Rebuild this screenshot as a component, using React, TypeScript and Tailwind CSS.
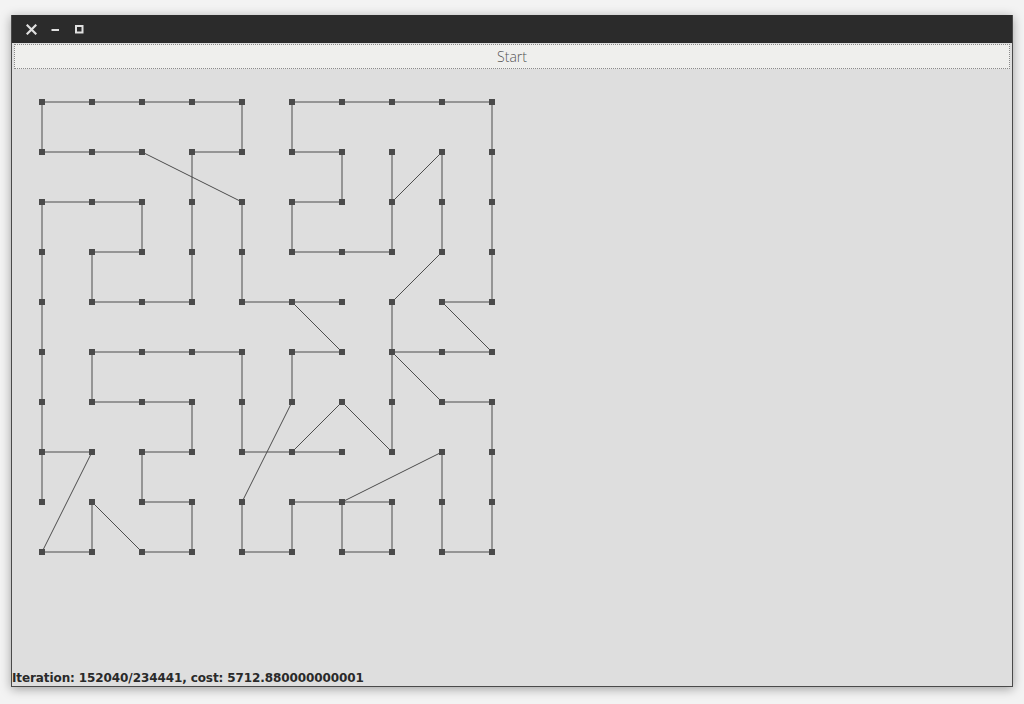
import React from "react"

// node grid: col c, row r -> local svg coords
const px = (c: number) => 30 + 50 * c
const py = (r: number) => 33 + 50 * r

// polylines through the grid, [c, r] pairs
const paths: number[][][] = [
  [[4, 1], [4, 0], [3, 0], [2, 0], [1, 0], [0, 0], [0, 1], [1, 1], [2, 1], [4, 2], [4, 3], [4, 4], [5, 4], [6, 4]],
  [[5, 4], [6, 5], [5, 5], [5, 6], [4, 8], [4, 9], [5, 9], [5, 8], [6, 8], [7, 8], [7, 9], [6, 9], [6, 8]],
  [[6, 8], [8, 7], [8, 8], [8, 9], [9, 9], [9, 8], [9, 7], [9, 6], [8, 6], [7, 5], [8, 5], [9, 5], [8, 4], [9, 4], [9, 3], [9, 2], [9, 1], [9, 0], [8, 0], [7, 0], [6, 0], [5, 0], [5, 1], [6, 1], [6, 2], [5, 2], [5, 3], [6, 3], [7, 3], [7, 2], [7, 1]],
  [[7, 2], [8, 1], [8, 2], [8, 3], [7, 4], [7, 5], [7, 6], [7, 7], [6, 6], [5, 7], [4, 7], [4, 6], [4, 5], [3, 5], [2, 5], [1, 5], [1, 6], [2, 6], [3, 6], [3, 7], [2, 7], [2, 8], [3, 8], [3, 9], [2, 9], [1, 8], [1, 9], [0, 9], [1, 7], [0, 7], [0, 8]],
  [[5, 7], [6, 7]],
  [[4, 1], [3, 1], [3, 2], [3, 3], [3, 4], [2, 4], [1, 4], [1, 3], [2, 3], [2, 2], [1, 2], [0, 2], [0, 3], [0, 4], [0, 5], [0, 6], [0, 7]],
]

function Graph() {
  const nodes: [number, number][] = []
  for (let r = 0; r < 10; r++) for (let c = 0; c < 10; c++) nodes.push([c, r])
  return (
    <svg width="520" height="560" className="block">
      {paths.map((p, i) => (
        <polyline
          key={i}
          points={p.map(([c, r]) => `${px(c)},${py(r)}`).join(" ")}
          fill="none"
          stroke="#4c4c4c"
          strokeWidth="1"
          strokeLinejoin="round"
        />
      ))}
      {nodes.map(([c, r]) => (
        <rect key={`${c}-${r}`} x={px(c) - 3} y={py(r) - 3} width="6" height="6" fill="#4a4a4a" />
      ))}
    </svg>
  )
}

export default function App() {
  return (
    <div className="w-[1024px] h-[704px] bg-[#f3f3f3] pt-[15px] pl-[11px] overflow-hidden">
      <div className="w-[1002px] h-[672px] flex flex-col bg-[#dedede] border-x border-b border-[#4a4a4a] shadow-[0_2px_10px_rgba(0,0,0,0.35)]">
        <div className="h-[28px] shrink-0 bg-[#2b2b2b] flex items-center gap-[13px] pl-[14px]">
          <svg width="11" height="11" viewBox="0 0 11 11">
            <path d="M1.5 1.5 L9.5 9.5 M9.5 1.5 L1.5 9.5" stroke="#e0e0e0" strokeWidth="2.2" strokeLinecap="square" />
          </svg>
          <svg width="11" height="11" viewBox="0 0 11 11">
            <path d="M1.5 6 L9 6" stroke="#e0e0e0" strokeWidth="2" />
          </svg>
          <svg width="11" height="11" viewBox="0 0 11 11">
            <rect x="2" y="2" width="6.5" height="6.5" fill="none" stroke="#e0e0e0" strokeWidth="2" />
          </svg>
        </div>
        <div className="mt-[1px] mx-[2px] h-[25px] shrink-0 bg-[#efefed] border border-dotted border-[#8a8a8a] flex items-center justify-center">
          <span className="text-[14px] font-light text-[#555] font-['Open_Sans',sans-serif]">Start</span>
        </div>
        <div className="flex-1 min-h-0">
          <Graph />
        </div>
        <div className="h-[16px] leading-[16px] text-[12px] tracking-[-0.1px] font-bold text-[#2a2a2a] font-['DejaVu_Sans',sans-serif] whitespace-nowrap">
          Iteration: 152040/234441, cost: 5712.880000000001
        </div>
      </div>
    </div>
  )
}
